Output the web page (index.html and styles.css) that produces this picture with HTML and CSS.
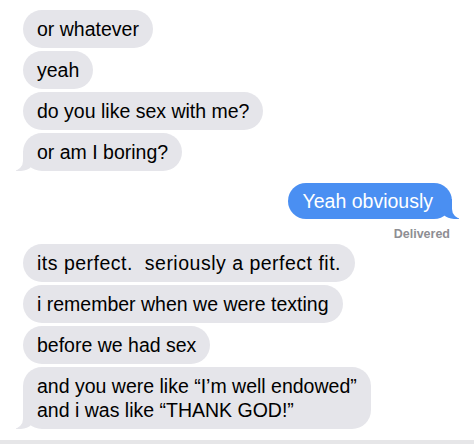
FILE: index.html
```html
<!DOCTYPE html>
<html lang="en">
<head>
<meta charset="UTF-8">
<title>Messages</title>
<link rel="stylesheet" href="styles.css">
</head>
<body>
<div class="thread">
  <div class="msg them">or whatever</div>
  <div class="msg them">yeah</div>
  <div class="msg them">do you like sex with me?</div>
  <div class="msg them tail">or am I boring?</div>

  <div class="msg me tail">Yeah obviously</div>
  <div class="status">Delivered</div>

  <div class="msg them wide">its perfect.&nbsp; seriously a perfect fit.</div>
  <div class="msg them">i remember when we were texting</div>
  <div class="msg them">before we had sex</div>
  <div class="msg them tail">and you were like “I’m well endowed”<br>and i was like “THANK GOD!”</div>
</div>
<div class="bottom_bar"></div>
</body>
</html>
```

FILE: styles.css
```css
* {
  margin: 0;
  padding: 0;
}
html,
body {
  height: 100%;
}
body {
  display: flex;
  flex-direction: column;
  background-color: #fff;
  font-family: "Liberation Sans", Arial, sans-serif;
}
.thread {
  flex: 1;
  display: flex;
  flex-direction: column;
  align-items: flex-start;
  gap: 3px;
  padding: 10px 22px 0 23px;
}
.msg {
  position: relative;
  padding: 7px 14px;
  border-radius: 19px;
  font-size: 19.5px;
  line-height: 24px;
  color: #000;
  background-color: #e5e5ea;
}
.msg.wide {
  letter-spacing: 0.5px;
}
.msg.me {
  align-self: flex-end;
  margin-top: 9px;
  padding: 6px 19px 6px 15px;
  border-radius: 18px;
  color: #fff;
  background-color: #4a8ff2;
}
/* bubble tail */
.msg.tail::before,
.msg.tail::after {
  content: "";
  position: absolute;
  bottom: 0;
  height: 20px;
}
.them.tail::before {
  left: -7px;
  width: 20px;
  background-color: #e5e5ea;
  border-bottom-right-radius: 15px;
}
.them.tail::after {
  left: -10px;
  width: 10px;
  background-color: #fff;
  border-bottom-right-radius: 10px;
}
.me.tail::before {
  right: -7px;
  width: 20px;
  background-color: #4a8ff2;
  border-bottom-left-radius: 15px;
}
.me.tail::after {
  right: -10px;
  width: 10px;
  background-color: #fff;
  border-bottom-left-radius: 10px;
}
.status {
  align-self: flex-end;
  margin: 4px 2px -1px 0;
  font-size: 12.5px;
  font-weight: bold;
  line-height: 16px;
  color: #8e8e93;
}
.bottom_bar {
  height: 4px;
  background-color: #e6e6e8;
}
```
